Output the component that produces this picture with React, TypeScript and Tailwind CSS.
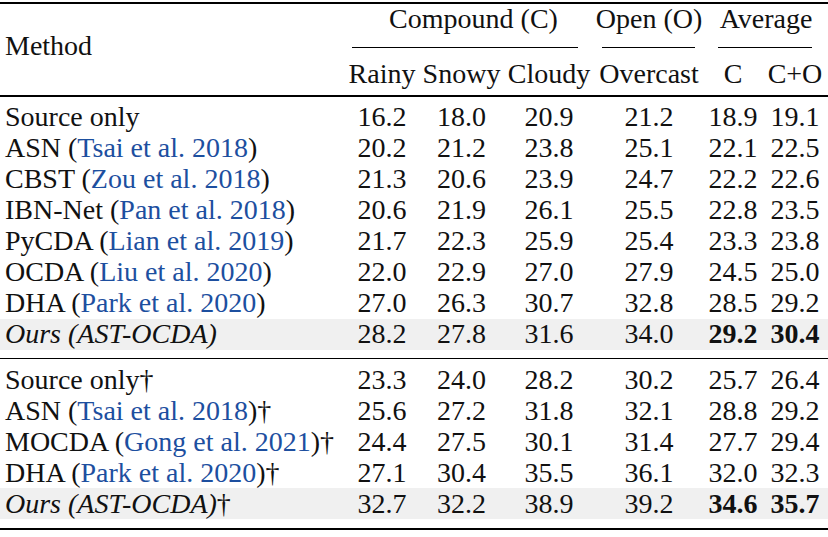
import React from "react";

const GRID = "grid grid-cols-[345px_74px_85px_90px_110px_58px_66px]";

type Row = {
  name: string;
  cite?: string;
  dagger?: boolean;
  ours?: boolean;
  v: string[];
};

const top: Row[] = [
  { name: "Source only", v: ["16.2", "18.0", "20.9", "21.2", "18.9", "19.1"] },
  { name: "ASN", cite: "Tsai et al. 2018", v: ["20.2", "21.2", "23.8", "25.1", "22.1", "22.5"] },
  { name: "CBST", cite: "Zou et al. 2018", v: ["21.3", "20.6", "23.9", "24.7", "22.2", "22.6"] },
  { name: "IBN-Net", cite: "Pan et al. 2018", v: ["20.6", "21.9", "26.1", "25.5", "22.8", "23.5"] },
  { name: "PyCDA", cite: "Lian et al. 2019", v: ["21.7", "22.3", "25.9", "25.4", "23.3", "23.8"] },
  { name: "OCDA", cite: "Liu et al. 2020", v: ["22.0", "22.9", "27.0", "27.9", "24.5", "25.0"] },
  { name: "DHA", cite: "Park et al. 2020", v: ["27.0", "26.3", "30.7", "32.8", "28.5", "29.2"] },
  { name: "Ours (AST-OCDA)", ours: true, v: ["28.2", "27.8", "31.6", "34.0", "29.2", "30.4"] },
];

const bottom: Row[] = [
  { name: "Source only", dagger: true, v: ["23.3", "24.0", "28.2", "30.2", "25.7", "26.4"] },
  { name: "ASN", cite: "Tsai et al. 2018", dagger: true, v: ["25.6", "27.2", "31.8", "32.1", "28.8", "29.2"] },
  { name: "MOCDA", cite: "Gong et al. 2021", dagger: true, v: ["24.4", "27.5", "30.1", "31.4", "27.7", "29.4"] },
  { name: "DHA", cite: "Park et al. 2020", dagger: true, v: ["27.1", "30.4", "35.5", "36.1", "32.0", "32.3"] },
  { name: "Ours (AST-OCDA)", ours: true, dagger: true, v: ["32.7", "32.2", "38.9", "39.2", "34.6", "35.7"] },
];

function BodyRow({ r }: { r: Row }) {
  return (
    <div className={`${GRID} h-[31px] items-center ${r.ours ? "bg-[#f0f0f0]" : ""}`}>
      <div className="pl-[5px] whitespace-nowrap">
        {r.ours ? <i>{r.name}</i> : r.name}
        {r.cite && (
          <>
            {" ("}
            <span className="text-[#1d4f9f]">{r.cite}</span>
            {")"}
          </>
        )}
        {r.dagger && "†"}
      </div>
      {r.v.map((x, i) => (
        <div
          key={i}
          className={`text-center whitespace-nowrap ${r.ours && i >= 4 ? "font-bold" : ""}`}
        >
          {x}
        </div>
      ))}
    </div>
  );
}

export default function App() {
  return (
    <div
      className="w-[828px] h-[537px] bg-white text-[#111] text-[28px] leading-none overflow-hidden"
      style={{ fontFamily: '"Liberation Serif", "Times New Roman", serif' }}
    >
      <div className="h-[2px]" />
      <div className="h-[2px] bg-black" />
      {/* header */}
      <div className={`${GRID} grid-rows-[44px_47px]`}>
        <div className="row-span-2 flex items-center pl-[5px] pb-[8px]">Method</div>
        <div className="col-span-3 flex flex-col justify-end">
          <div className="text-center pl-[8px] pb-[14px]">Compound (C)</div>
          <div className="h-px bg-black ml-[7px] mr-[16px]" />
        </div>
        <div className="flex flex-col justify-end">
          <div className="text-center pb-[14px]">Open (O)</div>
          <div className="h-px bg-black ml-[8px] mr-[9px]" />
        </div>
        <div className="col-span-2 flex flex-col justify-end">
          <div className="text-center pb-[14px]">Average</div>
          <div className="h-px bg-black ml-[14px] mr-[16px]" />
        </div>
        <div className="flex items-center justify-center pt-[5px]">Rainy</div>
        <div className="flex items-center justify-center pt-[5px]">Snowy</div>
        <div className="flex items-center justify-center pt-[5px]">Cloudy</div>
        <div className="flex items-center justify-center pt-[5px]">Overcast</div>
        <div className="flex items-center justify-center pt-[5px]">C</div>
        <div className="flex items-center justify-center pt-[5px]">C+O</div>
      </div>
      <div className="h-[1.5px] bg-black" />
      <div className="h-[5px]" />
      {top.map((r, i) => (
        <BodyRow key={i} r={r} />
      ))}
      <div className="h-[8px]" />
      <div className="h-[1.5px] bg-black" />
      <div className="h-[5px]" />
      {bottom.map((r, i) => (
        <BodyRow key={i} r={r} />
      ))}
      <div className="h-[9px]" />
      <div className="h-[2px] bg-black" />
    </div>
  );
}
